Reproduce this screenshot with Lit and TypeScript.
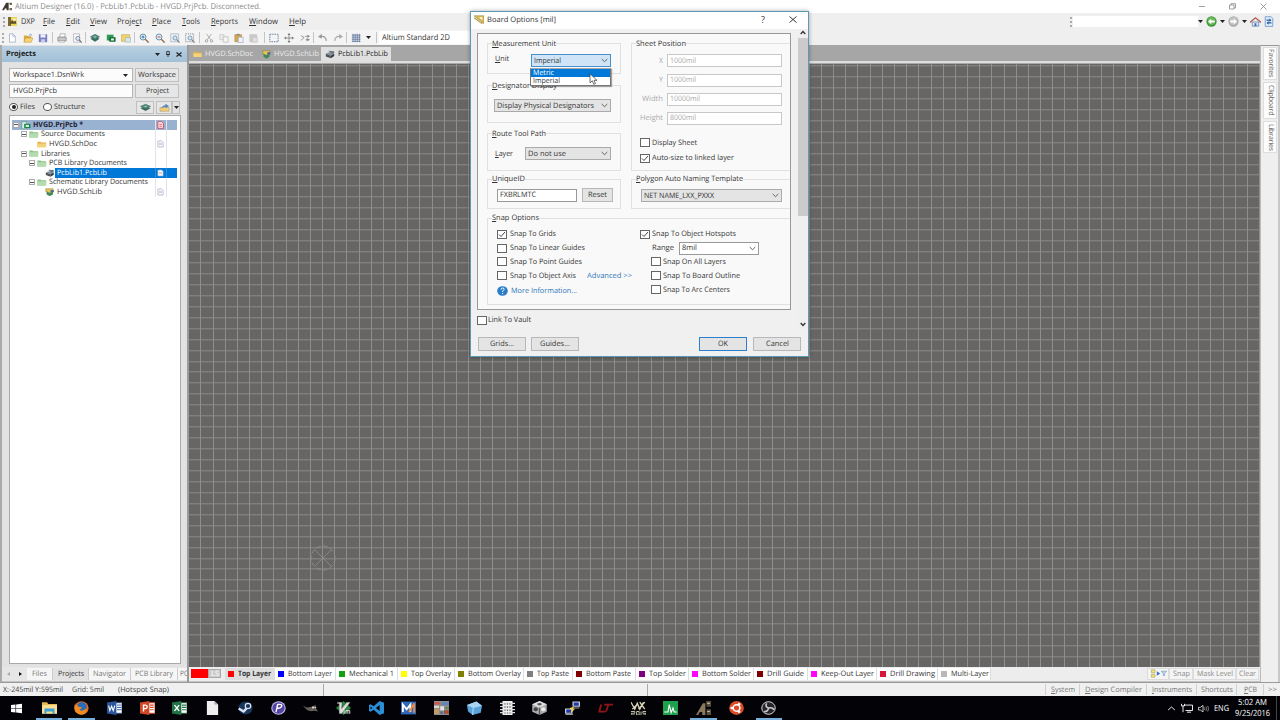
import { LitElement, html, css, svg, nothing } from "lit";
import { customElement, property, query } from "lit/decorators.js";
import { styleMap } from "lit/directives/style-map.js";
import { classMap } from "lit/directives/class-map.js";

/* Label set to an exact width; "&" marks the mnemonic letter. */
@customElement("ui-text")
class UiText extends LitElement {
  @property() label = "";
  @property({ type: Number }) w = 0;
  @query("span") span!: HTMLSpanElement;
  static styles = css`
    :host { display: inline-block; white-space: pre; flex: none; text-align: left; text-rendering: geometricPrecision; }
    span { display: inline-block; transform-origin: 0 50%; }
    u { text-decoration-thickness: 0.7px; text-underline-offset: 1px; }
  `;
  firstUpdated() {
    const natural = this.span.getBoundingClientRect().width;
    if (!this.w || !natural) return;
    this.style.width = `${this.w}px`;
    this.span.style.transform = `scaleX(${this.w / natural})`;
  }
  render() {
    const i = this.label.indexOf("&");
    return i < 0
      ? html`<span>${this.label}</span>`
      : html`<span>${this.label.slice(0, i)}<u>${this.label[i + 1]}</u>${this.label.slice(i + 2)}</span>`;
  }
}

const t = (label: string, w: number) => html`<ui-text .label=${label} .w=${w}></ui-text>`;
const wpx = (w: number) => styleMap({ width: `${w}px` });

const art: Record<string, unknown> = {
  new: svg`<path d="M3 1h4l3 3v7H3z" fill="#fff" stroke="#8fa0bd" stroke-width=".8"/><path d="M7 1v3h3" fill="none" stroke="#8fa0bd" stroke-width=".7"/>`,
  open: svg`<path d="M1 3h4l1 1h4v7H1z" fill="#d9a840"/><path d="M1 11l2-5h9l-2 5z" fill="#f6d478" stroke="#b58a3c" stroke-width=".5"/><path d="M7 3q2-3 4 0" fill="none" stroke="#5a86c0"/>`,
  save: svg`<path d="M1 1.500h10v9.500H1z" fill="#7a7cc4"/><path d="M3 1.500h6v4H3z" fill="#eef"/><path d="M3.500 7.500h5V11h-5z" fill="#c9cbe8"/>`,
  print: svg`<path d="M4 1h6L9 5H3z" fill="#fff" stroke="#777" stroke-width=".6"/><path d="M1 5h10v4.500H1z" fill="#c7c7cc" stroke="#777" stroke-width=".7"/><path d="M2 9h7v2H2z" fill="#eee" stroke="#888" stroke-width=".5"/>`,
  preview: svg`<path d="M2 1h7v10H2z" fill="#fff" stroke="#8b93a4" stroke-width=".7"/><circle cx="7" cy="6.500" r="2.500" fill="#d5e7f2" stroke="#667" stroke-width=".8"/><path d="M9 8.500l2.500 3" stroke="#667" stroke-width="1.300"/>`,
  board: svg`<path d="M6 4.500l5.500 2.500L6 10.500.5 7z" fill="#3a6a60"/><path d="M6 1.500L11.500 4.500 6 8 .5 4.500z" fill="#4f8a7c" stroke="#3a5c55" stroke-width=".6"/><path d="M4 4.500l2-1 2 1-2 1.300z" fill="#9accbd"/>`,
  green: svg`<path d="M1 2h8v7H1z" fill="#2f9a55"/><path d="M4 5h7.500v5.500H4z" fill="#156e38"/><path d="M6 6.500h3.500v2.500H6z" fill="#e4f3e4"/>`,
  yellow: svg`<path d="M.5 2h10v8H.5z" fill="#f4d56b" stroke="#b89a4c" stroke-width=".6"/><path d="M5 5.500h6.500V11H5z" fill="#d9e4ee" stroke="#8aa" stroke-width=".6"/>`,
  zoomin: svg`<circle cx="4.800" cy="4.800" r="3.600" fill="#dcecf5" stroke="#5f87a0"/><path d="M3 4.800h3.600M4.800 3v3.600" stroke="#245c8a" stroke-width=".9"/><path d="M7.500 7.500l4 4" stroke="#8d6a4a" stroke-width="1.600"/>`,
  zoomout: svg`<circle cx="4.800" cy="4.800" r="3.600" fill="#dcecf5" stroke="#5f87a0"/><path d="M3 4.800h3.600" stroke="#b22" stroke-width=".9"/><path d="M7.500 7.500l4 4" stroke="#8d6a4a" stroke-width="1.600"/>`,
  zoomdoc: svg`<path d="M.8 1h9.500v9.500H.8z" fill="#edf1f6" stroke="#93a2b3" stroke-width=".7"/><circle cx="6" cy="6" r="2.500" fill="#d5e8f2" stroke="#557c99" stroke-width=".8"/><path d="M8 8l3.500 3.500" stroke="#777" stroke-width="1.300"/>`,
  zoomsel: svg`<path d="M.8 1h9.500v9.500H.8z" fill="none" stroke="#5c6a7a" stroke-width=".8" stroke-dasharray="1.500 1"/><circle cx="6" cy="6" r="2.500" fill="#d5e8f2" stroke="#557c99" stroke-width=".8"/><path d="M8 8l3.500 3.500" stroke="#777" stroke-width="1.300"/>`,
  cut: svg`<path d="M3 1l5 7M9 1L4 8" stroke="#999" stroke-width=".9"/><circle cx="3" cy="9.500" r="1.500" fill="none" stroke="#999"/><circle cx="9" cy="9.500" r="1.500" fill="none" stroke="#999"/>`,
  copy: svg`<path d="M1 2h5v6H1z" fill="#eee" stroke="#c0c0c0" stroke-width=".8"/><path d="M5 4.500h6v6.500H5z" fill="#f4f4f4" stroke="#b4b4b4" stroke-width=".8"/>`,
  paste: svg`<path d="M1 2h8v8.500H1z" fill="#d9a84f" stroke="#9a7c46" stroke-width=".6"/><path d="M3.500 1h3v2h-3z" fill="#888"/><path d="M5 5h6v6.500H5z" fill="#edf2fa" stroke="#8192b4" stroke-width=".6"/>`,
  pastegray: svg`<path d="M1 2h8v8.500H1z" fill="#ccc" stroke="#b4b4b4" stroke-width=".6"/><path d="M4 5h6v6H4z" fill="#e0e0e0" stroke="#b4b4b4" stroke-width=".6"/>`,
  select: svg`<path d="M1 1.500h10v9H1z" fill="none" stroke="#4a5e88" stroke-width=".9" stroke-dasharray="1.800 1"/>`,
  move: svg`<path d="M6 1v10M1 6h10" stroke="#777" stroke-width=".9"/><path d="M6 0l1.800 2.500H4.200zM6 12l1.800-2.500H4.200zM0 6l2.500-1.800v3.600zM12 6L9.500 4.200v3.600z" fill="#777"/>`,
  cross: svg`<path d="M1 3l4 2.500L1 9M6 4h4M7 8h4" stroke="#888" fill="none"/><path d="M9 2l3 2-3 2zM8 6l4 2-4 2z" fill="#888"/>`,
  undo: svg`<path d="M3 4.500q6-2 7 5" fill="none" stroke="#999" stroke-width="1.500"/><path d="M0 4.500L4.500 1v6z" fill="#999"/>`,
  redo: svg`<path d="M9 4.500q-6-2-7 5" fill="none" stroke="#aaa" stroke-width="1.500"/><path d="M12 4.500L7.500 1v6z" fill="#aaa"/>`,
  grid: svg`<path d="M2.500 1v10M5 1v10M7.500 1v10M10 1v10M1 2.500h10.500M1 5h10.500M1 7.500h10.500M1 10h10.500" stroke="#47638f" stroke-width=".8"/>`,
  folder: svg`<path d="M.5 2.500h4l1 1.200h6V10H.5z" fill="#e0b04a"/><path d="M.5 5h11v5.500H.5z" fill="#f5d37a"/>`,
  gfolder: svg`<path d="M.5 2h4l1 1.200h6V10.500H.5z" fill="#8dc08a"/><path d="M1 4.500h11L11 10.500H.5z" fill="#b5dcae"/>`,
  schlib: svg`<path d="M1 1h9l1 4-5 2-5-2z" fill="#e9c84f" stroke="#776a30" stroke-width=".6"/><path d="M2 5l4 2 4-2v4l-4 2.500L2 9z" fill="#3f8a57"/><path d="M7 3h4v3H7z" fill="#4868a0"/>`,
  pcblib: svg`<path d="M1 5l4-2 6 2-4 2.500z" fill="#89929b"/><path d="M1 5l6 2.500v3.500L1 8.500z" fill="#4b535b"/><path d="M7 7.500L11 5v3l-4 3z" fill="#2f353c"/><path d="M4 1l7 .5v3L8 5z" fill="#6b757f"/>`,
  project: svg`<path d="M1 1h6v10H1z" fill="#dcefe0" stroke="#3b8558" stroke-width=".7"/><path d="M4 4h8v6H4z" fill="#1f8550"/><path d="M6 5.500h4v3H6z" fill="#d6efdd"/>`,
  doc: svg`<path d="M2.500 1.500h5l2 2v7h-7z" fill="#fff" stroke="#92a2ba" stroke-width=".9"/><path d="M4 5h4M4 7h4" stroke="#92a2ba" stroke-width=".8"/>`,
  reddoc: svg`<path d="M2.500 1h5l2.500 2.500V11H2.500z" fill="#fbe6ea" stroke="#e0303c" stroke-width="1"/><path d="M4.300 5h4M4.300 8h4" stroke="#e0303c" stroke-width=".9"/>`,
  share: svg`<path d="M1 6h10v5H1z" fill="#f0cf78" stroke="#9c8650" stroke-width=".5"/><path d="M3 8q0-5 4-5V1l4 3-4 3V5Q4 5 3 8z" fill="#5585bd"/>`,
  dxp: svg`<path d="M0 0h12v12H0z" fill="#ead55b"/><path d="M0 0h4v12H0z" fill="#7b6930"/><path d="M2 9l4-6 2 4 2-4 1 6z" fill="#5d4e28"/><path d="M6 2h5v3H6z" fill="#f8f0b0"/>`,
  altium: svg`<path d="M0 11L5 1h3v10H5.500V8.500H3.500L2.500 11z" fill="#3c3830"/><path d="M8.500 1H12v3H9.500zM9 8h3v3H9z" fill="#746b50"/>`,
  set: svg`<path d="M0 1h12v10.500z" fill="#d8bd55" stroke="#87733a" stroke-width=".6"/><path d="M6 3h4v3.500z" fill="#fff"/><path d="M0 3.500l10 8" stroke="#b49a4c" stroke-width="1.600"/>`,
  back: svg`<circle cx="6" cy="6" r="5.600" fill="#3f963a"/><circle cx="6" cy="5.500" r="4.300" fill="#68b75a"/><path d="M2.200 6l3.500-3v2H9.500v2H5.700v2z" fill="#fff"/>`,
  fwd: svg`<circle cx="6" cy="6" r="5.600" fill="#aaa"/><circle cx="6" cy="5.500" r="4.300" fill="#c4c4c4"/><path d="M9.800 6L6.300 3v2H2.500v2h3.800v2z" fill="#fff"/>`,
  home: svg`<path d="M2.500 6h7v5h-7z" fill="#dce8f5" stroke="#5879a5" stroke-width=".8"/><path d="M0 6.500L6 1l6 5.500" fill="none" stroke="#b0605a" stroke-width="1.500"/><path d="M5 7.500h2V11H5z" fill="#3d6cb0"/>`,
  page: svg`<path d="M1.500.8h7l2 2v8.500h-9z" fill="#e4f0fb" stroke="#5e8fc6" stroke-width=".9"/><path d="M3 4.500h4M5 7.500h4" stroke="#2a5ca0" stroke-width="1.500"/><path d="M6.500 2.500l2.500 2-2.500 2zM5.500 5.500L3 7.500l2.500 2z" fill="#2a5ca0"/>`,
  filter: svg`<path d="M1 1h2.500v4H1zM1 7h2.500v4H1z" fill="#f3e07a" stroke="#a49a50" stroke-width=".5"/><path d="M4.800 3l2.400 3-2.400 3z" fill="#3a6fd0"/><path d="M7.800 3h4l-1.500 2.500V9l-1-.5v-3z" fill="#c4d8ee" stroke="#6a8fc0" stroke-width=".5"/>`,
  win: svg`<path d="M1 2.300L5.500 1.700v4H1zM6.100 1.600L12 .8v4.900H6.100zM1 6.300h4.500v4L1 9.700zM6.100 6.300H12v4.900l-5.900-.8z" fill="#fff"/>`,
  explorer: svg`<path d="M0 1h4l1 1.500h7V6H0z" fill="#e8b84e"/><path d="M0 3.500h12V11H0z" fill="#f9df92"/><path d="M2 6.500h8V11H8.500V9h-5v2H2z" fill="#3aa0d8"/>`,
  firefox: svg`<circle cx="6" cy="6" r="5.700" fill="#e66a1c"/><circle cx="6.300" cy="4.800" r="3.900" fill="#2b6cb8"/><path d="M.5 3q2 0 3 2l3 .5-2 2q2 2 5.500-1Q11 11 6 11.700.5 11 .3 6z" fill="#f28c22"/>`,
  word: svg`<path d="M5 1.500h7v9H5z" fill="#fff" stroke="#2b579a" stroke-width=".6"/><path d="M8 3.500h3.500M8 5.500h3.500M8 7.500h3.500" stroke="#2b579a" stroke-width=".8"/><path d="M0 1.200L7.500 0v12L0 10.800z" fill="#2b579a"/><path d="M1.300 4l1 4.200L3.700 4.500 5 8.200 6.200 4" fill="none" stroke="#fff" stroke-width=".9"/>`,
  ppt: svg`<path d="M5 1.500h7v9H5z" fill="#fff" stroke="#d24726" stroke-width=".8"/><path d="M8 3.500h3M8 5.500h3M8 7.500h3" stroke="#d24726" stroke-width="1"/><path d="M0 1.200L7.500 0v12L0 10.800z" fill="#d24726"/><path d="M2.800 9V3.500h1.500q1.500.2 1.500 1.500T4.300 6.500H2.800" fill="none" stroke="#fff" stroke-width="1.100"/>`,
  excel: svg`<path d="M5 1.500h7v9H5z" fill="#fff" stroke="#217346" stroke-width=".6"/><path d="M8 3.500h3.500M8 5.500h3.500M8 7.500h3.500" stroke="#217346" stroke-width="1"/><path d="M0 1.200L7.500 0v12L0 10.800z" fill="#217346"/><path d="M2 3.500L5.700 8.500M5.700 3.500L2 8.500" stroke="#fff" stroke-width="1.100"/>`,
  libre: svg`<path d="M1.500 0h6L10.500 3v9h-9z" fill="#eee"/><path d="M7.500 0v3h3z" fill="#aaa"/>`,
  steam: svg`<circle cx="6" cy="6" r="5.600" fill="#17365c"/><path d="M.5 6.500l4 2.500 3-3.500" stroke="#d8e3ef" stroke-width="2" fill="none"/><circle cx="8" cy="4.200" r="2.200" fill="#17365c" stroke="#d8e3ef"/>`,
  pidgin: svg`<circle cx="6" cy="6" r="5.800" fill="#c0b8e6"/><circle cx="6" cy="6" r="4.900" fill="#5445a5"/><path d="M4 9.500L5.300 3q4-.6 3.200 1.600-.6 1.700-3.500 1.600" fill="none" stroke="#fff" stroke-width="1.100"/>`,
  gimp: svg`<path d="M0 4l3 1.500L7 5l3-1.500.5 3L12 9l-3-.6Q4 9.500 2 6.500z" fill="#655f57"/><circle cx="8" cy="5.600" r=".9" fill="#ddd"/><circle cx="9.900" cy="5.600" r=".7" fill="#ddd"/>`,
  vim: svg`<path d="M6 0l6 6-6 6-6-6z" fill="#2c8a3c"/><path d="M1 1h3.800v1.300L4.500 6.500 8 2V1h3.500L4.500 11H2.500V2.300H1z" fill="#ddd" stroke="#333" stroke-width=".3"/><path d="M6.500 11V8M8 11V8.200h1.500V11M9.500 8.200H11V11" stroke="#ddd" stroke-width=".8" fill="none"/>`,
  code: svg`<path d="M8.500 0L12 1.500v9L8.500 12 3.700 7.400 1.300 9.300 0 8.600V3.400l1.300-.7 2.400 1.900zM8.500 3.500L5.500 6l3 2.500zM1.200 4.700v2.600L2.600 6z" fill="#2c8fd6" fill-rule="evenodd"/>`,
  multi: svg`<path d="M0 .5h12v11H0z" fill="#3069ba"/><path d="M1.500 9.500V3l3 4 3-4v6.500" fill="none" stroke="#fff" stroke-width="1.500"/><path d="M6.500 9.500L10.500 2v8" fill="none" stroke="#ee8a3c" stroke-width="1.400"/>`,
  collage: svg`<path d="M0 0h12v12H0z" fill="#8f8d90"/><path d="M0 1h5v2H0z" fill="#c8584c"/><path d="M6 1h6v2.500H6z" fill="#5e86b8"/><path d="M0 4h4v2H0z" fill="#ded8c8"/><path d="M0 7h4v4H0z" fill="#c49b62"/><path d="M5 4.500h3V8H5z" fill="#e5e5e5"/><path d="M9 5h3v2H9z" fill="#688a50"/><path d="M8 8h4v3H8z" fill="#a34f38"/><path d="M5 9h2v2H5z" fill="#4d6c9a"/>`,
  vbox: svg`<path d="M0 3.500L7.500.5 12 4l-1 6-6.500 2L.8 9z" fill="#5aa2d8"/><path d="M0 3.500L5 6l7-2L7.500.5z" fill="#a9d5f2"/><path d="M5 6l-.5 6" stroke="#cde7f8" stroke-width=".7"/>`,
  chip: svg`<path d="M2 0h8v12H2z" fill="#eee"/><path d="M0 2h12M0 4.700h12M0 7.400h12M0 10h12" stroke="#ddd" stroke-width="1"/><path d="M4 2v9M6 2v9M8 2v9" stroke="#777" stroke-width=".9" stroke-dasharray="1.300 1.300"/>`,
  cube: svg`<path d="M6 0l5.800 2.800v6.400L6 12 .2 9.200V2.800z" fill="#aaa"/><path d="M6 0l5.800 2.800L6 5.700.2 2.800z" fill="#ddd"/><path d="M6 5.700V12" stroke="#555"/><circle cx="3" cy="7" r="1.700" fill="#444"/><circle cx="9" cy="7" r="1.700" fill="#eee"/><ellipse cx="6" cy="2.800" rx="1.800" ry="1" fill="#555"/>`,
  putty: svg`<path d="M6 .5h6v4.500H6zM0 6.500h6V11H0z" fill="#c8ccd4"/><path d="M7 1.300h4v2.700H7zM1 7.300h4V10H1z" fill="#2538a8"/><path d="M7 5.500L4 6.500l3 .5-2 2.500" stroke="#f3dd3f" fill="none" stroke-width="1"/><path d="M6.500 5.500h5v1h-5zM.5 11h6v1h-6z" fill="#999"/>`,
  lt: svg`<path d="M2.500 3L1 9h5M6.500 9L8.200 3.500M5 3H12" fill="none" stroke="#8f1618" stroke-width="1.500"/>`,
  was: svg`<path d="M0 1l3 6 2-5 2 5 3-6M7 1l4 6M1 7l4-4M6 7l5-6" fill="none" stroke="#d8d5b8" stroke-width="1.100"/><path d="M0 9h3v1.500H0v1.500h3M4.500 9h2v3h-2zM8 9v3M9.500 9H12M9.500 9v1.500H12V12H9.500" fill="none" stroke="#c8c5a8" stroke-width=".8"/>`,
  monitor: svg`<path d="M0 0h12v12H0z" fill="#1da14c"/><path d="M1 9.500h3L5 3l1.500 7L8 6l1 3.500h2" fill="none" stroke="#fff" stroke-width=".9"/>`,
  ad: svg`<path d="M0 12L5.500 2h2v10H5V9.500H3L1.800 12z" fill="#8a795a"/><path d="M8 0h4v5H8.500zM8.500 7H12v5H8.500z" fill="#57503f"/><path d="M9 2h2M9 9h2" stroke="#ccc0a0"/>`,
  ubuntu: svg`<circle cx="6" cy="6" r="5.900" fill="#dd4b26"/><circle cx="6" cy="6" r="2.700" fill="none" stroke="#fff" stroke-width="1.300"/><circle cx="2.200" cy="6" r="1.100" fill="#fff"/><circle cx="8" cy="2.700" r="1.100" fill="#fff"/><circle cx="8" cy="9.300" r="1.100" fill="#fff"/>`,
  obs: svg`<circle cx="6" cy="6" r="5.400" fill="#26262a" stroke="#ddd" stroke-width=".8"/><path d="M6 6Q3 5 4.500 2M6 6q3-1 4.500 1.500M6 6q-.5 3.500-3.500 3" fill="none" stroke="#ccc" stroke-width="1.300"/>`,
  up: svg`<path d="M1.500 8L6 4l4.500 4" fill="none" stroke="#fff" stroke-width="1.200"/>`,
  net: svg`<path d="M3.500 2.500H11.500V9H4.500" fill="none" stroke="#fff" stroke-width="1"/><path d="M6 11h4M.5 1v2.500h3V1M2 3.500V11" fill="none" stroke="#fff" stroke-width="1"/>`,
  vol: svg`<path d="M.5 4.500h2L5.500 2v8.500L2.500 8h-2z" fill="none" stroke="#fff" stroke-width=".9"/><path d="M7 4.500q1 1.700 0 3.500M8.700 3.500q1.700 2.700 0 5.500M10.500 2.500q2.300 3.700 0 7.500" fill="none" stroke="#bbb" stroke-width=".8"/>`,
};
const icon = (name: string, w = 12, h = 11) =>
  html`<svg width=${w} height=${h} viewBox="0 0 12 12" preserveAspectRatio="none">${art[name]}</svg>`;
const caret = html`<svg width="5" height="3" viewBox="0 0 5 3"><path d="M0 0h5L2.500 3z" fill="#222" /></svg>`;
const chevron = html`<svg width="7" height="5" viewBox="0 0 7 5"><path d="M.7 1l2.800 2.700L6.300 1" fill="none" stroke="#555" stroke-width=".9" /></svg>`;

const base = css`
  :host, * { box-sizing: border-box; }
  svg { display: block; flex: none; }
  .row { display: flex; align-items: center; }
`;

@customElement("top-bars")
class TopBars extends LitElement {
  static styles = [base, css`
    :host { display: block; height: 45px; background: #efefef; font-size: 8px; line-height: 12px; color: #333; }
    .title { height: 13px; background: #fff; color: #8b8b8b; padding-left: 2px; gap: 3px; }
    .caption { margin-left: auto; gap: 24px; padding-right: 13px; }
    .menu { height: 17px; padding-left: 3px; }
    .grip { width: 2px; height: 10px; border-left: 2px dotted #aaa; flex: none; }
    .dxp { margin: 0 4px 0 3px; }
    .cell { flex: none; }
    .address { margin-left: auto; height: 16px; }
    .address .field { width: 125px; height: 11px; background: #fff; margin: 0 0 0 1px; }
    .nav { gap: 3px; padding-right: 6px; }
    .tools { height: 15px; background: #f4f4f4; width: 470px; padding-left: 2px; }
    .slot { display: flex; justify-content: center; flex: none; }
    .bar { width: 1px; height: 11px; background: #c4c4c4; }
    .view { height: 13px; flex: 1; background: #fff; padding-left: 3px; font-size: 8px; }
  `];
  render() {
    const menu: [string, number, number][] = [["DXP", 14, 22], ["&File", 12, 23], ["&Edit", 14, 24], ["&View", 17, 27], ["Proje&ct", 25, 35], ["&Place", 19, 30], ["&Tools", 18, 29], ["&Reports", 27, 38], ["&Window", 29, 40], ["&Help", 17, 20]];
    const tools: [string, number][] = [["new", 16], ["open", 15], ["save", 16], ["|", 3], ["print", 16], ["preview", 14], ["|", 3], ["board", 16], ["green", 16], ["yellow", 14], ["|", 3], ["zoomin", 16], ["zoomout", 15], ["zoomdoc", 15], ["zoomsel", 15], ["|", 4], ["cut", 15], ["copy", 15], ["paste", 15], ["pastegray", 16], ["|", 4], ["select", 15], ["move", 16], ["cross", 15], ["|", 3], ["undo", 15], ["redo", 15], ["|", 3], ["grid", 16]];
    return html`
      <div class="row title">
        ${icon("altium", 10, 9)} ${t("Altium Designer (16.0) - PcbLib1.PcbLib - HVGD.PrjPcb. Disconnected.", 246)}
        <div class="row caption">
          <svg width="6" height="7" viewBox="0 0 6 7"><path d="M0 3.500h6" stroke="#888" stroke-width=".8" /></svg>
          <svg width="7" height="7" viewBox="0 0 7 7"><path d="M.5 2h4.500v4H.5zM2 2V.7h4.500V5H5" fill="none" stroke="#888" stroke-width=".8" /></svg>
          <svg width="7" height="7" viewBox="0 0 7 7"><path d="M.5.5l6 6M6.500.5l-6 6" stroke="#888" stroke-width=".8" /></svg>
        </div>
      </div>
      <div class="row menu">
        <i class="grip"></i><span class="dxp">${icon("dxp", 9, 9)}</span>
        ${menu.map(([l, w, cell]) => html`<span class="cell" style=${wpx(cell)}>${t(l, w)}</span>`)}
        <div class="row address">
          <i class="grip"></i><div class="field"></div>
          <div class="row nav">${caret}${icon("back", 11, 11)}${caret}${icon("fwd", 11, 11)}${caret}${icon("home", 11, 10)}${icon("page", 10, 11)}</div>
        </div>
      </div>
      <div class="row tools">
        <i class="grip"></i>
        ${tools.map(([n, w]) => html`<span class="slot" style=${wpx(w)}>${n === "|" ? html`<i class="bar"></i>` : icon(n, 10, 10)}</span>`)}
        <span class="slot" style=${wpx(9)}>${caret}</span>
        <span class="slot" style=${wpx(6)}><i class="bar"></i></span>
        <div class="row view">${t("Altium Standard 2D", 68)}</div>
      </div>`;
  }
}

interface Node { l: string; w: number; lvl: number; ic: string; open?: boolean; doc?: string; kind?: string; }

@customElement("projects-panel")
class ProjectsPanel extends LitElement {
  static styles = [base, css`
    :host { display: flex; flex-direction: column; width: 189px; height: 637px; background: #e2e2e2; border-left: 2px solid #aaa; border-right: 2px solid #9a9a9a; font-size: 7.5px; line-height: 10px; color: #333; flex: none; }
    .head { height: 16px; margin-top: 1px; background: linear-gradient(#b9d0e1, #a2c0d7); font-weight: 700; padding: 0 5px 0 4px; color: #222; flex: none; }
    .tools { margin-left: auto; gap: 6px; }
    .body { flex: 1; display: flex; flex-direction: column; padding: 6px 5px 3px 7px; min-height: 0; }
    .line { display: flex; gap: 2px; margin-bottom: 2px; }
    .box { background: #fcfcfc; border: 1px solid #b6b6b6; height: 14px; width: 124px; padding: 0 4px 0 3px; justify-content: space-between; }
    .btn { border: 1px solid #c0c0c0; background: #e6e6e6; height: 14px; width: 44px; display: flex; align-items: center; justify-content: center; flex: none; }
    .mode { height: 14px; margin: 0 2px 1px 0; }
    .radio { width: 9px; height: 8px; border: 1px solid #555; border-radius: 50%; background: #fff; margin-right: 2px; display: flex; align-items: center; justify-content: center; flex: none; }
    .radio.on::after { content: ""; width: 4px; height: 4px; border-radius: 50%; background: #222; }
    .gap { width: 8px; }
    .btn.small { width: 18px; height: 13px; margin-left: auto; }
    .btn.small + .small { margin-left: 2px; width: 16px; }
    .drop { width: 8px; height: 13px; border: 1px solid #c0c0c0; display: flex; align-items: center; justify-content: center; }
    .tree { flex: 1; background: #fff; border: 1px solid #aaa; padding: 4px 3px 0 2px; margin: 0 1px 0 0; }
    .node { height: 9.600px; padding-left: 1px; }
    .node.root { background: #9ab2d2; font-weight: 700; color: #223; }
    .node.sel .name { background: #0078d7; color: #fff; }
    .name { flex: 1; align-self: stretch; padding-left: 2px; }
    .col { width: 11px; align-self: stretch; border-left: 1px solid #e4e4e4; display: flex; align-items: center; }
    .node.sel .col { background: #0078d7; border-color: #2d8ce0; }
    .pm { width: 6px; height: 6px; border: 1px solid #aaa; background: #fff; display: flex; align-items: center; margin-right: 2px; }
    .pm::after { content: ""; width: 100%; height: 1px; background: #555; }
    .tabs { height: 15px; padding-bottom: 1px; background: #e6e6e6; overflow: hidden; flex: none; color: #777; border-bottom: 1px solid #c4c4c4; }
    .arrows { width: 25px; gap: 9px; padding-left: 5px; flex: none; }
    .tab { height: 12px; display: flex; align-items: center; justify-content: center; background: #f6f6f6; border-right: 1px solid #ccc; flex: none; }
    .tab.on { background: #e2e2e2; color: #333; }
  `];
  render() {
    const nodes: Node[] = [
      { l: "HVGD.PrjPcb *", w: 50, lvl: 0, ic: "project", open: true, doc: "reddoc", kind: "root" },
      { l: "Source Documents", w: 64, lvl: 1, ic: "gfolder", open: true },
      { l: "HVGD.SchDoc", w: 48, lvl: 2, ic: "folder", doc: "doc" },
      { l: "Libraries", w: 29, lvl: 1, ic: "gfolder", open: true },
      { l: "PCB Library Documents", w: 78, lvl: 2, ic: "gfolder", open: true },
      { l: "PcbLib1.PcbLib", w: 50, lvl: 3, ic: "pcblib", doc: "doc", kind: "sel" },
      { l: "Schematic Library Documents", w: 99, lvl: 2, ic: "gfolder", open: true },
      { l: "HVGD.SchLib", w: 45, lvl: 3, ic: "schlib", doc: "doc" },
    ];
    const tabs: [string, number, number, boolean][] = [["Files", 15, 26, false], ["Projects", 26, 36, true], ["Navigator", 33, 42, false], ["PCB Library", 38, 47, false], ["PC", 8, 12, false]];
    return html`
      <div class="row head">${t("Projects", 30)}
        <div class="row tools">${caret}
          <svg width="4" height="6" viewBox="0 0 4 6"><path d="M.7.5h2.600v3H.7zM0 3.500h4M2 3.500V6" fill="none" stroke="#222" stroke-width=".8" /></svg>
          <svg width="6" height="5" viewBox="0 0 6 5"><path d="M.5.5l5 4M5.500.5l-5 4" stroke="#222" stroke-width="1.200" /></svg>
        </div>
      </div>
      <div class="body">
        <div class="line"><div class="row box">${t("Workspace1.DsnWrk", 71)}${caret}</div><div class="btn">${t("Workspace", 38)}</div></div>
        <div class="line"><div class="row box">${t("HVGD.PrjPcb", 44)}</div><div class="btn">${t("Project", 23)}</div></div>
        <div class="row mode">
          <i class="radio on"></i>${t("Files", 15)}<i class="gap"></i><i class="radio"></i>${t("Structure", 31)}
          <span class="btn small">${icon("board", 11, 9)}</span><span class="btn small">${icon("share", 11, 9)}</span><span class="drop">${caret}</span>
        </div>
        <div class="tree">
          ${nodes.map((n) => html`
            <div class=${classMap({ row: true, node: true, root: n.kind === "root", sel: n.kind === "sel" })}>
              <i style=${wpx(n.lvl * 8 + (n.open ? 0 : 8))}></i>
              ${n.open ? html`<i class="pm"></i>` : nothing}
              ${icon(n.ic, 9.500, 8.500)}
              <span class="row name">${t(n.l, n.w)}</span>
              <span class="col">${n.doc ? icon(n.doc, 9, 8) : nothing}</span><span class="col"></span>
            </div>`)}
        </div>
      </div>
      <div class="row tabs">
        <div class="row arrows"><svg width="3" height="4" viewBox="0 0 3 4"><path d="M3 0v4L0 2z" fill="#aaa" /></svg><svg width="3" height="4" viewBox="0 0 3 4"><path d="M0 0v4l3-2z" fill="#111" /></svg></div>
        ${tabs.map(([l, w, c, on]) => html`<span class=${classMap({ tab: true, on })} style=${wpx(c)}>${t(l, w)}</span>`)}
      </div>`;
  }
}

@customElement("pcb-editor")
class PcbEditor extends LitElement {
  static styles = [base, css`
    :host { display: flex; flex-direction: column; flex: 1; height: 637px; font-size: 7.500px; line-height: 10px; color: #333; min-width: 0; }
    .docs { height: 16px; background: #a6a6a6; color: #ececec; align-items: flex-end; padding-top: 2px; flex: none; }
    .doc { height: 14px; gap: 3px; padding-left: 4px; flex: none; }
    .doc.on { background: #e0e0e0; color: #222; }
    .rule { height: 3px; background: #dedede; border-bottom: 1px solid #aaa; flex: none; }
    .canvas {
      flex: 1; display: flex;
      background:
        repeating-linear-gradient(90deg, #8f8e8c 0 1px, transparent 1px 12.169px) -0.800px 0 / 1100px 100%,
        repeating-linear-gradient(180deg, #8b8a87 0 1px, transparent 1px 10.945px) 0 1.300px / 100% 700px,
        #676664;
      align-items: flex-end; padding: 0 0 96px 120px;
    }
    .layers { height: 15px; padding-bottom: 1px; background: #ededed; border-bottom: 1px solid #c4c4c4; flex: none; }
    .cur { width: 17px; height: 9px; background: #f00; margin-left: 2px; }
    .ls { width: 13px; height: 9px; background: #ccc; color: #fff; display: flex; justify-content: center; margin-right: 4px; border: 1px solid #aaa; line-height: 8px; }
    .layer { height: 12px; background: #fff; border-right: 1px solid #ddd; padding-left: 3px; gap: 4px; flex: none; }
    .layer.on { background: #ddd; font-weight: 700; }
    .sw { width: 6px; height: 6px; flex: none; }
    .end { margin-left: auto; padding-right: 1px; color: #888; }
    .opt { height: 12px; background: #f4f4f4; border: 1px solid #ddd; display: flex; align-items: center; justify-content: center; }
  `];
  render() {
    const layers: [string, string, number, number][] = [["Top Layer", "#f00", 33, 50], ["Bottom Layer", "#00f", 44, 61], ["Mechanical 1", "#10a010", 45, 62], ["Top Overlay", "#ff0", 40, 57], ["Bottom Overlay", "#808000", 53, 69], ["Top Paste", "#808080", 32, 49], ["Bottom Paste", "#800000", 45, 63], ["Top Solder", "#800080", 37, 53], ["Bottom Solder", "#ff00ff", 49, 65], ["Drill Guide", "#800000", 37, 54], ["Keep-Out Layer", "#ff00ff", 53, 69], ["Drill Drawing", "#d8143a", 45, 61], ["Multi-Layer", "#b8b8b8", 38, 53]];
    return html`
      <div class="row docs">
        <div class="row doc" style=${wpx(69)}>${icon("folder", 9, 8)}${t("HVGD.SchDoc", 48)}</div>
        <div class="row doc" style=${wpx(63)}>${icon("schlib", 9, 9)}${t("HVGD.SchLib", 45)}</div>
        <div class="row doc on" style=${wpx(70)}>${icon("pcblib", 10, 9)}${t("PcbLib1.PcbLib", 50)}</div>
      </div>
      <div class="rule"></div>
      <div class="canvas">
        <svg width="28" height="26" viewBox="0 0 28 26"><circle cx="14" cy="13" r="12" fill="none" stroke="#8f8e8c" stroke-width=".9" stroke-dasharray="5 2" /><path d="M6 5l16 16M22 5L6 21" stroke="#8f8e8c" stroke-width=".8" /></svg>
      </div>
      <div class="row layers">
        <i class="cur"></i><span class="ls">${t("LS", 8)}</span>
        ${layers.map(([l, c, w, cell], i) => html`<div class=${classMap({ row: true, layer: true, on: i === 0 })} style=${wpx(cell)}><i class="sw" style=${styleMap({ background: c })}></i>${t(l, w)}</div>`)}
        <div class="row end">
          <span class="opt" style=${wpx(22)}>${icon("filter", 17, 9)}</span>
          <span class="opt" style=${wpx(24)}>${t("Snap", 17)}</span>
          <span class="opt" style=${wpx(43)}>${t("Mask Level", 36)}</span>
          <span class="opt" style=${wpx(23)}>${t("Clear", 17)}</span>
        </div>
      </div>`;
  }
}

@customElement("side-tabs")
class SideTabs extends LitElement {
  static styles = [base, css`
    :host { display: flex; flex-direction: column; align-items: center; gap: 2px; width: 20px; height: 637px; padding: 1px 0 0 0; background: #efefef; border-left: 1px solid #bbb; border-top: 1px solid #999; border-right: 2px solid #c8c8c8; font-size: 7px; letter-spacing: -0.15px; color: #666; flex: none; }
    .tab { writing-mode: vertical-rl; width: 14px; background: #fcfcfc; border: 1px solid #ddd; display: flex; align-items: center; justify-content: center; line-height: 12px; text-rendering: geometricPrecision; }
    .a { height: 33px; } .b { height: 37px; } .c { height: 32px; }
  `];
  render() {
    return html`<span class="tab a">Favorites</span><span class="tab b">Clipboard</span><span class="tab c">Libraries</span>`;
  }
}

@customElement("status-bar")
class StatusBar extends LitElement {
  static styles = [base, css`
    :host { display: flex; align-items: center; height: 14px; background: #f0f0f0; border-top: 1px solid #999; font-size: 7.500px; line-height: 10px; color: #444; padding-left: 3px; }
    .c { flex: none; padding-bottom: 1px; }
    .sep { width: 1px; height: 12px; background: #aaa; }
    .end { margin-left: auto; color: #777; }
    .p { display: flex; justify-content: center; border-left: 1px solid #d0d0d0; height: 11px; padding-top: 1px; }
  `];
  render() {
    const end: [string, number, number][] = [["&System", 24, 34], ["&Design Compiler", 57, 67], ["&Instruments", 40, 50], ["Shortcuts", 32, 40], ["&PCB", 13, 27], [">>", 9, 17]];
    return html`
      <span class="c" style=${wpx(69)}>${t("X:-245mil Y:595mil", 60)}</span>
      <span class="c" style=${wpx(46)}>${t("Grid: 5mil", 32)}</span>
      <span class="c" style=${wpx(205)}>${t("(Hotspot Snap)", 51)}</span>
      <i class="sep"></i><span class="c" style=${wpx(323)}></span><i class="sep"></i>
      <div class="row end">${end.map(([l, w, c]) => html`<span class="p" style=${wpx(c)}>${t(l, w)}</span>`)}</div>`;
  }
}

@customElement("task-bar")
class TaskBar extends LitElement {
  static styles = [base, css`
    :host { display: flex; height: 24px; background: #020207; color: #fff; font-size: 8.500px; line-height: 11px; }
    .app { width: 32.720px; flex: none; display: flex; justify-content: center; align-items: center; position: relative; }
    .run::after { content: ""; position: absolute; bottom: 0; left: 3px; right: 3px; height: 2px; background: #76b0dc; }
    .tray { margin-left: auto; gap: 5px; padding-right: 3px; }
    .clock { display: flex; flex-direction: column; align-items: center; margin-left: 1px; margin-right: 1px; }
    .show { width: 1px; height: 24px; background: #444; }
  `];
  render() {
    const apps = ["win", "explorer", "firefox", "word", "ppt", "excel", "libre", "steam", "pidgin", "gimp", "vim", "code", "multi", "collage", "vbox", "chip", "cube", "putty", "lt", "was", "monitor", "ad", "ubuntu", "obs"];
    const run = new Set(["explorer", "firefox", "ad", "obs"]);
    return html`
      ${apps.map((a) => html`<span class=${classMap({ app: true, run: run.has(a) })}>${a === "win" ? icon(a, 12, 11) : icon(a, 15, 14)}</span>`)}
      <div class="row tray">
        ${icon("up", 9, 9)}${icon("net", 12, 10)}${icon("vol", 11, 9)} ${t("ENG", 15)}
        <div class="clock">${t("5:02 AM", 29)}${t("9/25/2016", 35)}</div><i class="show"></i>
      </div>`;
  }
}

@customElement("board-options")
class BoardOptions extends LitElement {
  static styles = [base, css`
    :host { display: flex; flex-direction: column; width: 339px; height: 346px; border: 1px solid #5a9ab8; background: #f0f0f0; box-shadow: 0 0 4px rgba(0,0,0,.35); font-size: 7.500px; line-height: 10px; color: #333; }
    .bar { height: 17px; background: #fff; padding: 0 11px 2px 3px; gap: 3px; flex: none; }
    .help { margin-left: auto; font-size: 9px; margin-right: 21px; }
    .main { display: flex; height: 300px; flex: none; }
    .left { width: 327px; padding: 4px 0 0 6px; }
    .scroll { width: 10px; display: flex; flex-direction: column; align-items: center; background: #efefef; padding: 1px 0 2px; flex: none; }
    .thumb { width: 10px; height: 178px; background: #cbcbcb; margin: 3px 0 auto; }
    .panel { width: 314px; height: 277px; border: 1px solid #999; background: #f9f9f9; padding-left: 9px; }
    .cols { display: flex; gap: 10px; padding-top: 9px; }
    .col { width: 134px; }
    .col.wide { width: 159px; }
    .group { border: 1px solid #e0e0e0; }
    .wide .group, .group.snap { border-right: 0; }
    .cap { display: flex; margin: -5px 0 -1px 4px; height: 11px; }
    .g4 .cap, .snap .cap { margin: -6px 0 0 4px; }
    .cap ui-text { background: #f9f9f9; }
    .g1 { height: 31px; } .g2 { height: 38px; margin-top: 11px; } .g3 { height: 38px; margin-top: 10px; } .g4 { height: 30px; margin-top: 8px; }
    .sheet { height: 128px; }
    .snap { height: 87px; margin-top: 9px; display: flex; }
    .snap .half { width: 143px; flex: none; }
    .combo { height: 13px; border: 1px solid #aaa; background: #e4e4e4; padding: 0 2px; justify-content: space-between; }
    .combo.blue { background: #cfe5f7; border-color: #4a90c8; }
    .combo.white { background: #fff; border-color: #999; }
    .unit { padding: 5px 9px 0 7px; justify-content: space-between; }
    .raised { display: flex; padding-bottom: 3px; }
    .des { padding: 8px 9px 0 6px; }
    .route { padding: 8px 9px 0 7px; justify-content: space-between; }
    .uid { padding: 3px 7px 0 9px; justify-content: space-between; }
    .poly { padding: 4px 8px 0 9px; }
    .w80 { width: 80px; } .w87 { width: 86px; } .w79 { width: 80px; }
    .input { height: 13px; border: 1px solid #999; background: #fff; padding-left: 2px; }
    .f { height: 13px; margin-bottom: 6.200px; justify-content: flex-end; gap: 4px; padding-right: 8px; color: #aaa; }
    .f .input { width: 115px; border-color: #c8c8c8; }
    .fields { padding: 5.400px 0 4px; }
    .chk { height: 13.800px; gap: 3px; }
    .box { width: 10px; height: 9px; border: 1px solid #666; background: #fff; flex: none; }
    .sheetchk { padding-left: 8px; height: 15.500px; gap: 2px; }
    .list { padding-left: 9px; }
    .start { padding-top: 3.500px; }
    .link { color: #2f74b8; }
    .adv { margin-left: 11px; display: flex; }
    .more { margin-top: 2px; height: 13px; gap: 3px; }
    .hot { padding-left: 9px; }
    .hot .cap { margin-left: 0; }
    .hot .chk { gap: 2px; }
    .range { gap: 5px; padding-left: 12px; height: 13.800px; }
    .hot .in { padding-left: 11px; }
    .vault { height: 20px; gap: 1px; }
    .foot { padding: 0 7px 0 7px; height: 15px; margin-top: 7px; gap: 5px; flex: none; }
    .btn { height: 14px; width: 48px; border: 1px solid #b8b8b8; background: #e4e4e4; display: flex; align-items: center; justify-content: center; flex: none; }
    .btn.reset { width: 31px; }
    .btn.ok { margin-left: auto; border: 1.500px solid #2a7fd0; margin-right: 1px; }
    .menu { position: absolute; left: 59px; top: 56px; width: 81px; height: 18px; background: #fff; border: 1px solid #777; border-top-color: #aaa; box-shadow: 1px 1px 1px rgba(0,0,0,.35); line-height: 8px; z-index: 2; }
    .opt { height: 8px; padding-left: 2px; display: flex; align-items: center; }
    .opt.on { background: #0078d7; color: #fff; }
    .pointer { position: absolute; left: 118px; top: 61px; z-index: 3; }
  `];
  private check(label: string, w: number, on = false, cls = "") {
    return html`<div class="row chk ${cls}">
      <span class="box">${on ? html`<svg width="8" height="7" viewBox="0 0 8 7"><path d="M1 3.500l2 2L7 1" fill="none" stroke="#333" stroke-width=".9" /></svg>` : nothing}</span>${t(label, w)}</div>`;
  }
  private combo(label: string, w: number, cls = "") {
    return html`<div class="row combo ${cls}">${t(label, w)}${chevron}</div>`;
  }
  render() {
    const fields: [string, number, string, number][] = [["X", 4, "1000mil", 26], ["Y", 4, "1000mil", 26], ["Width", 21, "10000mil", 30], ["Height", 23, "8000mil", 26]];
    return html`
      <div class="row bar">${icon("set", 10, 9)}<span class="row">${t("Board Options [mil]", 69)}</span><span class="help">?</span>
        <svg width="8" height="7" viewBox="0 0 8 7"><path d="M.5.5l7 6M7.500.5l-7 6" stroke="#222" stroke-width=".9" /></svg></div>
      <div class="main">
        <div class="left">
          <div class="panel">
            <div class="cols">
              <div class="col">
                <div class="group g1"><div class="cap">${t("&Measurement Unit", 64)}</div><div class="row unit"><span class="raised">${t("&Unit", 14)}</span>${this.combo("Imperial", 27, "blue w80")}</div></div>
                <div class="group g2"><div class="cap">${t("&Designator Display", 65)}</div><div class="des">${this.combo("Display Physical Designators", 97)}</div></div>
                <div class="group g3"><div class="cap">${t("&Route Tool Path", 54)}</div><div class="row route">${t("&Layer", 18)}${this.combo("Do not use", 38, "w87")}</div></div>
                <div class="group g4"><div class="cap">${t("&UniqueID", 33)}</div><div class="row uid"><div class="row input w79">${t("FXBRLMTC", 36)}</div><span class="btn reset">${t("Reset", 19)}</span></div></div>
              </div>
              <div class="col wide">
                <div class="group sheet"><div class="cap">${t("Sheet Position", 50)}</div>
                  <div class="fields">${fields.map(([l, w, v, vw]) => html`<div class="row f">${t(l, w)}<div class="row input">${t(v, vw)}</div></div>`)}</div>
                  ${this.check("Display Sheet", 45, false, "sheetchk")}${this.check("Auto-size to linked layer", 82, true, "sheetchk")}
                </div>
                <div class="group g4"><div class="cap">${t("&Polygon Auto Naming Template", 107)}</div><div class="poly">${this.combo("NET NAME_LXX_PXXX", 70)}</div></div>
              </div>
            </div>
            <div class="group snap">
              <div class="half"><div class="cap">${t("&Snap Options", 47)}</div>
                <div class="list start">
                  ${this.check("Snap To Grids", 46, true)}${this.check("Snap To Linear Guides", 75)}${this.check("Snap To Point Guides", 72)}
                  <div class="row">${this.check("Snap To Object Axis", 66)}<span class="link adv">${t("Advanced >>", 45)}</span></div>
                  <div class="row link more"><svg width="11" height="10" viewBox="0 0 11 10"><ellipse cx="5.500" cy="5" rx="5.300" ry="4.800" fill="#2b7cc8" /><path d="M4 3.700q0-1.700 1.600-1.700t1.500 1.400q0 .8-1.500 1.700v.9M5.600 7v1" fill="none" stroke="#fff" stroke-width="1" /></svg>${t("More Information...", 66)}</div>
                </div>
              </div>
              <div class="hot"><div class="cap"></div><div class="start">
                ${this.check("Snap To Object Hotspots", 84, true)}
                <div class="row range">${t("Range", 22)}${this.combo("8mil", 15, "white w80")}</div>
                ${this.check("Snap On All Layers", 63, false, "in")}${this.check("Snap To Board Outline", 77, false, "in")}${this.check("Snap To Arc Centers", 67, false, "in")}</div></div>
            </div>
          </div>
          <div class="row vault"><span class="box"></span>${t("Link To Vault", 43)}</div>
        </div>
        <div class="scroll">
          <svg width="6" height="5" viewBox="0 0 6 5"><path d="M.7 4L3 1.500 5.300 4" fill="none" stroke="#333" stroke-width="1.300" /></svg>
          <i class="thumb"></i>
          <svg width="6" height="5" viewBox="0 0 6 5"><path d="M.7 1L3 3.500 5.300 1" fill="none" stroke="#333" stroke-width="1.300" /></svg>
        </div>
      </div>
      <div class="row foot">
        <span class="btn">${t("Grids...", 24)}</span><span class="btn">${t("Guides...", 30)}</span>
        <span class="btn ok">${t("OK", 10)}</span><span class="btn">${t("Cancel", 23)}</span>
      </div>
      <div class="menu"><div class="opt on">${t("Metric", 21)}</div><div class="opt">${t("Imperial", 27)}</div></div>
      <svg class="pointer" width="9" height="12" viewBox="0 0 9 12"><path d="M1 .8v9l2.300-2 1.500 3.500 1.700-.7L5 7.300h3z" fill="#fff" stroke="#333" stroke-width=".7" /></svg>`;
  }
}

@customElement("app-root")
class AppRoot extends LitElement {
  static styles = css`
    :host { display: block; width: 1280px; height: 720px; overflow: hidden; position: relative; font-family: "Open Sans", "Noto Sans", sans-serif; background: #efefef; }
    .work { display: flex; height: 637px; }
    .dialog { position: absolute; left: 470px; top: 11px; }
  `;
  render() {
    return html`
      <top-bars></top-bars>
      <div class="work"><projects-panel></projects-panel><pcb-editor></pcb-editor><side-tabs></side-tabs></div>
      <status-bar></status-bar>
      <task-bar></task-bar>
      <board-options class="dialog"></board-options>`;
  }
}
